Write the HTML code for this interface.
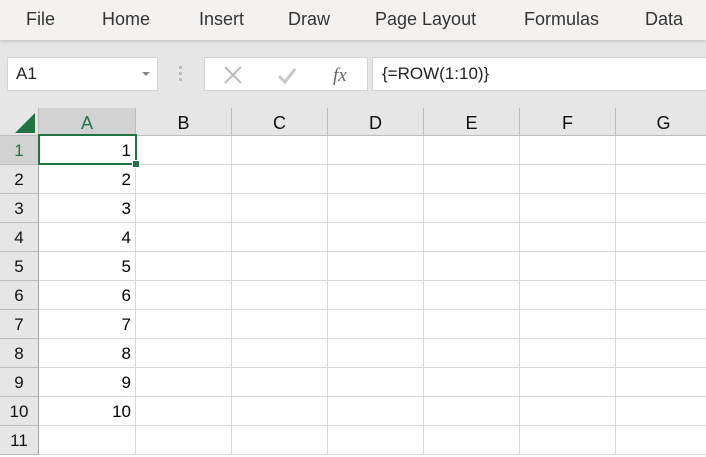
<!DOCTYPE html><html><head><style>
body{margin:0;width:706px;height:457px;overflow:hidden;background:#e6e6e6;font-family:"Liberation Sans",sans-serif;position:relative}
.menu{position:absolute;left:0;top:0;width:706px;height:40px;background:#f3f2f1;box-shadow:0 2px 3px rgba(0,0,0,.12)}
.menu span{position:absolute;top:9px;font-size:18px;color:#333}
.box{position:absolute;background:#fff;border:1px solid #d4d4d4;top:57px;height:34px;box-sizing:border-box}
.grid{position:absolute;left:0;top:108px;width:706px;height:349px;background:#fff}
.ch{position:absolute;top:108px;height:28px;background:#e6e6e6;border-right:1px solid #bcbcbc;border-bottom:1px solid #bcbcbc;box-sizing:border-box;text-align:center;font-size:18px;line-height:30px;color:#111}
.rh{position:absolute;left:0;width:39px;height:29px;background:#e6e6e6;border-bottom:1px solid #bcbcbc;border-right:1px solid #a0a0a0;box-sizing:border-box;text-align:center;font-size:17px;line-height:30px;color:#111}
.c{position:absolute;box-sizing:border-box;border-right:1px solid #d8d8d8;border-bottom:1px solid #d8d8d8;height:29px;width:96px}
.v{position:absolute;left:39px;width:92px;text-align:right;font-size:17px;line-height:30px;color:#000}
</style></head><body>
<div class="menu"><span style="left:26px">File</span><span style="left:102px">Home</span><span style="left:199px">Insert</span><span style="left:288px">Draw</span><span style="left:375px">Page Layout</span><span style="left:524px">Formulas</span><span style="left:645px">Data</span></div>
<div class="box" style="left:7px;width:151px"><span style="position:absolute;left:8px;top:6px;font-size:17px;color:#222">A1</span><span style="position:absolute;left:134px;top:14px;width:0;height:0;border-left:4px solid transparent;border-right:4px solid transparent;border-top:4px solid #888"></span></div>
<div style="position:absolute;left:179px;top:66px;width:3px;height:3px;background:#bbb;box-shadow:0 6px 0 #bbb,0 12px 0 #bbb"></div>
<div class="box" style="left:204px;width:164px"><svg width="164" height="34" style="position:absolute;left:0;top:0"><path d="M20 9l16 16M36 9L20 25" stroke="#bcbcbc" stroke-width="2" fill="none"/><path d="M74 18l6 6 10-13" stroke="#c8c8c8" stroke-width="3" fill="none"/><text x="128" y="23" font-family="Liberation Serif" font-style="italic" font-size="19" fill="#666">fx</text></svg></div>
<div class="box" style="left:372px;width:340px"><span style="position:absolute;left:9px;top:6px;font-size:17px;color:#222">{=ROW(1:10)}</span></div>
<div class="grid"></div>
<div class="ch" style="left:0;width:39px;background:#e6e6e6"><svg width="39" height="28" style="position:absolute;left:0;top:0"><path d="M35 5L35 25L15 25Z" fill="#217346"/></svg></div>
<div class="ch" style="left:39px;width:97px;background:#d2d2d2;border-bottom:2px solid #217346;color:#217346">A</div>
<div class="ch" style="left:136px;width:96px">B</div>
<div class="ch" style="left:232px;width:96px">C</div>
<div class="ch" style="left:328px;width:96px">D</div>
<div class="ch" style="left:424px;width:96px">E</div>
<div class="ch" style="left:520px;width:96px">F</div>
<div class="ch" style="left:616px;width:96px">G</div>
<div id="rows"></div>
<script>
var h='';
for(var r=0;r<11;r++){var t=136+r*29;
h+='<div class="rh" style="top:'+t+'px;'+(r==0?'background:#d2d2d2;color:#217346;':'')+'">'+(r+1)+'</div>';
for(var c=0;c<7;c++){h+='<div class="c" style="top:'+t+'px;left:'+(39+c*96+(c>0?1:0))+'px;'+(c==0?'width:97px':'')+'"></div>';}
if(r<10)h+='<div class="v" style="top:'+t+'px">'+(r+1)+'</div>';}
document.getElementById('rows').innerHTML=h;
</script>
<div style="position:absolute;left:38px;top:134px;width:99px;height:31px;border:2px solid #217346;box-sizing:border-box"></div>
<div style="position:absolute;left:132px;top:160px;width:6px;height:6px;background:#217346;border:1px solid #fff"></div>
</body></html>
